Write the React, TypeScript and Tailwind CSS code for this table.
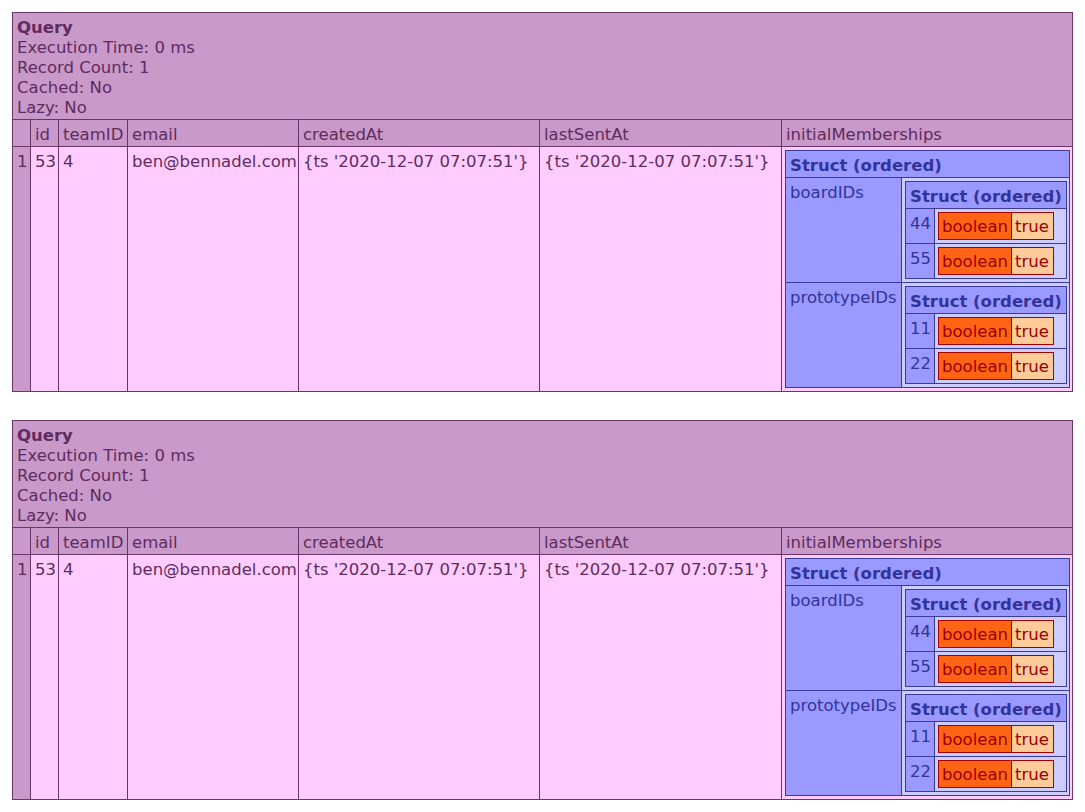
import React from "react";

const qb = "border border-[#6b346b]";
const sb = "border border-[#3b3b9b]";
const bb = "border border-[#a30000]";
const pad = "pl-[4px] pr-[2px] pt-[5px] pb-[1px] align-top";

function Bool() {
  return (
    <table className="border-collapse table-fixed w-[116px]">
      <colgroup>
        <col className="w-[73px]" />
        <col />
      </colgroup>
      <tbody>
        <tr>
          <td className={`${bb} bg-[#ff6414] text-[#990000] pl-[3px] pr-[1px] pt-[4px] pb-[2px] align-top whitespace-nowrap`}>boolean</td>
          <td className={`${bb} bg-[#ffcc99] text-[#990000] pl-[3px] pr-[1px] pt-[4px] pb-[2px] align-top whitespace-nowrap`}>true</td>
        </tr>
      </tbody>
    </table>
  );
}

function InnerStruct({ keys }: { keys: string[] }) {
  return (
    <table className="border-collapse table-fixed w-[162px]">
      <colgroup>
        <col className="w-[29px]" />
        <col />
      </colgroup>
      <tbody>
        <tr>
          <th colSpan={2} className={`${sb} bg-[#9999ff] text-[#33339a] font-bold text-left ${pad} whitespace-nowrap`}>
            Struct (ordered)
          </th>
        </tr>
        {keys.map((k) => (
          <tr key={k}>
            <td className={`${sb} bg-[#9999ff] text-[#33339a] ${pad}`}>{k}</td>
            <td className={`${sb} bg-[#ccccff] p-[3px] align-top`}>
              <Bool />
            </td>
          </tr>
        ))}
      </tbody>
    </table>
  );
}

function OuterStruct() {
  return (
    <table className="border-collapse table-fixed w-[285px]">
      <colgroup>
        <col className="w-[116px]" />
        <col />
      </colgroup>
      <tbody>
        <tr>
          <th colSpan={2} className={`${sb} bg-[#9999ff] text-[#33339a] font-bold text-left ${pad} whitespace-nowrap`}>
            Struct (ordered)
          </th>
        </tr>
        <tr>
          <td className={`${sb} bg-[#9999ff] text-[#33339a] ${pad}`}>boardIDs</td>
          <td className={`${sb} bg-[#ccccff] p-[3px] align-top`}>
            <InnerStruct keys={["44", "55"]} />
          </td>
        </tr>
        <tr>
          <td className={`${sb} bg-[#9999ff] text-[#33339a] ${pad}`}>prototypeIDs</td>
          <td className={`${sb} bg-[#ccccff] p-[3px] align-top`}>
            <InnerStruct keys={["11", "22"]} />
          </td>
        </tr>
      </tbody>
    </table>
  );
}

function QueryDump() {
  const th = `${qb} bg-[#c999c9] text-[#5e2c5e] font-normal text-left ${pad} whitespace-nowrap`;
  const td = `${qb} bg-[#ffccff] text-[#5e2c5e] ${pad}`;
  return (
    <table className="border-collapse table-fixed w-[1061px]">
      <colgroup>
        <col className="w-[18px]" />
        <col className="w-[28px]" />
        <col className="w-[69px]" />
        <col className="w-[171px]" />
        <col className="w-[241px]" />
        <col className="w-[242px]" />
        <col />
      </colgroup>
      <tbody>
        <tr>
          <th colSpan={7} className={`${qb} bg-[#c999c9] text-[#5e2c5e] font-normal text-left ${pad}`}>
            <div className="font-bold">Query</div>
            <div>Execution Time: 0 ms</div>
            <div>Record Count: 1</div>
            <div>Cached: No</div>
            <div>Lazy: No</div>
          </th>
        </tr>
        <tr>
          <th className={th}></th>
          <th className={th}>id</th>
          <th className={th}>teamID</th>
          <th className={th}>email</th>
          <th className={th}>createdAt</th>
          <th className={th}>lastSentAt</th>
          <th className={th}>initialMemberships</th>
        </tr>
        <tr>
          <td className={`${qb} bg-[#c999c9] text-[#5e2c5e] ${pad}`}>1</td>
          <td className={td}>53</td>
          <td className={td}>4</td>
          <td className={`${td} whitespace-nowrap`}>ben@bennadel.com</td>
          <td className={`${td} whitespace-nowrap`}>{"{ts '2020-12-07 07:07:51'}"}</td>
          <td className={`${td} whitespace-nowrap`}>{"{ts '2020-12-07 07:07:51'}"}</td>
          <td className={`${qb} bg-[#ffccff] p-[3px] align-top`}>
            <OuterStruct />
          </td>
        </tr>
      </tbody>
    </table>
  );
}

export default function App() {
  return (
    <div className="min-h-screen bg-white p-[12px] font-['DejaVu_Sans','Verdana',sans-serif] text-[16.5px] leading-[20px]">
      <div className="flex flex-col gap-[28px]">
        <QueryDump />
        <QueryDump />
      </div>
    </div>
  );
}
